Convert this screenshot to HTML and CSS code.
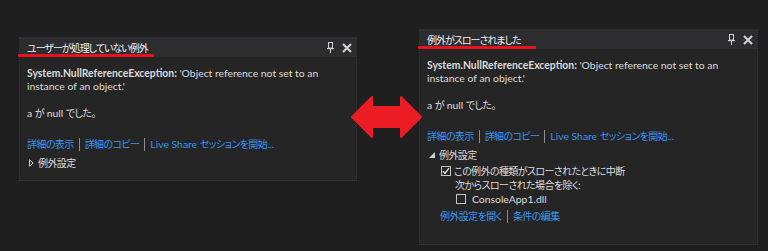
FILE: index.html
```html
<!DOCTYPE html>
<html lang="ja">
<head>
<meta charset="utf-8">
<link rel="stylesheet" href="styles.css">
</head>
<body>
<div class="stage">
  <section class="panel panel-left">
    <header class="head">
      <span class="title ja">ユーザーが処理していない例外</span>
      <span class="tools">
        <svg class="pin" width="7" height="11" viewBox="0 0 7 11"><rect x="1.5" y="0.5" width="4" height="5.5" fill="none" stroke="#cfcfcf"/><rect x="0" y="6" width="7" height="1.2" fill="#cfcfcf"/><rect x="3" y="7" width="1" height="4" fill="#cfcfcf"/></svg>
        <svg class="close" width="10" height="10" viewBox="0 0 10 10"><path d="M1 1L9 9M9 1L1 9" stroke="#d4d4d4" stroke-width="2"/></svg>
      </span>
    </header>
    <div class="body">
      <p class="msg"><b>System.NullReferenceException:</b> 'Object reference not set to an<br>instance of an object.'</p>
      <p class="detail">a <span class="ja">が</span> null <span class="ja">でした。</span></p>
      <nav class="links">
        <a class="ja">詳細の表示</a><i class="sep"></i><a class="ja">詳細のコピー</a><i class="sep"></i><a>Live Share <span class="ja">セッションを開始...</span></a>
      </nav>
      <div class="settings-toggle">
        <svg class="tri" width="5" height="8" viewBox="0 0 5 8"><path d="M0.5 0.8L4.2 4L0.5 7.2Z" fill="none" stroke="#cfcfcf"/></svg>
        <span class="ja">例外設定</span>
      </div>
    </div>
  </section>

  <section class="panel panel-right">
    <header class="head">
      <span class="title ja">例外がスローされました</span>
      <span class="tools">
        <svg class="pin" width="7" height="11" viewBox="0 0 7 11"><rect x="1.5" y="0.5" width="4" height="5.5" fill="none" stroke="#cfcfcf"/><rect x="0" y="6" width="7" height="1.2" fill="#cfcfcf"/><rect x="3" y="7" width="1" height="4" fill="#cfcfcf"/></svg>
        <svg class="close" width="10" height="10" viewBox="0 0 10 10"><path d="M1 1L9 9M9 1L1 9" stroke="#d4d4d4" stroke-width="2"/></svg>
      </span>
    </header>
    <div class="body">
      <p class="msg"><b>System.NullReferenceException:</b> 'Object reference not set to an<br>instance of an object.'</p>
      <p class="detail">a <span class="ja">が</span> null <span class="ja">でした。</span></p>
      <nav class="links">
        <a class="ja">詳細の表示</a><i class="sep"></i><a class="ja">詳細のコピー</a><i class="sep"></i><a>Live Share <span class="ja">セッションを開始...</span></a>
      </nav>
      <div class="settings">
        <div class="settings-toggle open">
          <svg class="tri" width="6" height="6" viewBox="0 0 6 6"><path d="M6 0L6 6L0 6Z" fill="#cfcfcf"/></svg>
          <span class="ja">例外設定</span>
        </div>
        <div class="settings-list">
          <label class="row"><span class="box checked"><svg width="8" height="8" viewBox="0 0 8 8"><path d="M1 4.2L3 6.4L7 1.2" fill="none" stroke="#e8e8e8" stroke-width="1.3"/></svg></span><span class="ja">この例外の種類がスローされたときに中断</span></label>
          <div class="row sub ja">次からスローされた場合を除く:</div>
          <label class="row sub"><span class="box"></span>ConsoleApp1.dll</label>
        </div>
        <nav class="links links-bottom">
          <a class="ja">例外設定を開く</a><i class="sep"></i><a class="ja">条件の編集</a>
        </nav>
      </div>
    </div>
  </section>

  <svg class="arrow" width="71" height="42" viewBox="-1 -1 71 42"><polygon points="0,20 20,0 20,10 49,10 49,0 69,20 49,40 49,30 20,30 20,40" fill="#ec1c24" stroke="#ec1c24" stroke-width="2" stroke-linejoin="round"/></svg>
</div>
</body>
</html>
```
FILE: styles.css
```css
* { box-sizing: border-box; }
html, body {
  margin: 0;
  padding: 0;
  background: #1f1f1f;
  width: 768px;
  height: 251px;
  overflow: hidden;
}
body {
  font-family: Lato, "Noto Sans CJK JP", sans-serif;
  font-size: 10.4px;
  line-height: 14px;
  color: #dcdcdc;
}
.ja {
  font-family: "Noto Sans CJK JP", sans-serif;
  font-size: 10px;
  line-height: 14px;
  letter-spacing: -0.6px;
  font-feature-settings: "palt";
}
p { margin: 0; }
.msg { height: 26px; line-height: 13px; white-space: nowrap; }
.msg b { font-weight: 700; }
.detail { height: 14px; margin-top: 13px; }
.stage {
  position: relative;
  display: flex;
  align-items: flex-start;
  gap: 62px;
  padding-left: 19px;
}
.panel {
  background: #252526;
  border: 1px dotted #34343a;
}
.panel-left { margin-top: 37px; width: 338px; height: 144px; }
.panel-right { margin-top: 29px; width: 339px; height: 216px; }
.head {
  position: relative;
  height: 19px;
  background: #2d2d30;
  display: flex;
  align-items: center;
  padding: 0 4px 0 7px;
}
.title { color: #f1f1f1; letter-spacing: -1px; }
.head::after {
  content: "";
  position: absolute;
  left: -2px;
  top: 16px;
  height: 2.5px;
  border-radius: 1px;
  background: #e8131f;
}
.panel-left .head::after { width: 136px; }
.panel-right .head::after { width: 118px; }
.tools {
  margin-left: auto;
  display: flex;
  align-items: center;
  gap: 8px;
}
.pin { display: block; }
.close { display: block; }
.body { padding: 10px 8px 0 7px; }
.links {
  display: flex;
  align-items: center;
  height: 14px;
  margin-top: 17px;
}
.links a { color: #3a96f0; }
.sep {
  display: block;
  width: 1px;
  height: 13px;
  background: #8a8a8a;
  margin: 0 5px;
}
.settings-toggle {
  display: flex;
  align-items: center;
  height: 14px;
  gap: 4px;
  margin-top: 5px;
  padding-left: 2px;
}
.tri { display: block; }
.settings-list { padding-left: 14px; margin-top: 2px; }
.row {
  display: flex;
  align-items: center;
  height: 14px;
  gap: 3px;
}
.row.sub { padding-left: 14px; }
.box {
  display: flex;
  align-items: center;
  justify-content: center;
  width: 10px;
  height: 10px;
  border: 1px solid #c4c4c4;
}
.row.sub .box { margin-right: 3px; margin-left: 1px; }
.links-bottom { margin-top: 3px; padding-left: 13px; }
.arrow {
  position: absolute;
  left: 351px;
  top: 96px;
}
```
